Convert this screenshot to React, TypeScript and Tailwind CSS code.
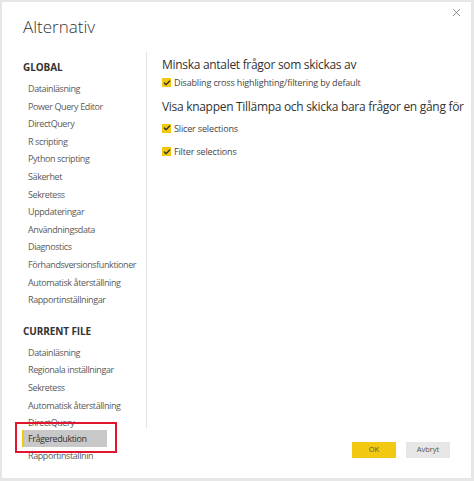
import { Check, X } from "lucide-react";

const GLOBAL_ITEMS = [
  "Datainläsning",
  "Power Query Editor",
  "DirectQuery",
  "R scripting",
  "Python scripting",
  "Säkerhet",
  "Sekretess",
  "Uppdateringar",
  "Användningsdata",
  "Diagnostics",
  "Förhandsversionsfunktioner",
  "Automatisk återställning",
  "Rapportinställningar",
];

const FILE_ITEMS = ["Datainläsning", "Regionala inställningar", "Sekretess", "Automatisk återställning", "DirectQuery"];

const FONT = { fontFamily: '"Open Sans", "Noto Sans", sans-serif' };

function CheckRow({ label }: { label: string }) {
  return (
    <div className="flex items-center gap-[3px]">
      <span className="flex h-[9px] w-[9px] items-center justify-center bg-[#f2c811]">
        <Check className="h-[8px] w-[8px] text-[#333]" strokeWidth={4} />
      </span>
      <span className="whitespace-nowrap text-[9px] tracking-[-0.15px] text-[#444]">{label}</span>
    </div>
  );
}

function NavItem({ label }: { label: string }) {
  return (
    <div className="h-[17.6px] whitespace-nowrap pl-[5px] text-[9px] leading-[17.6px] tracking-[-0.4px] text-[#5a5a5a]">
      {label}
    </div>
  );
}

export default function App() {
  return (
    <div className="h-[481px] w-[474px] bg-[#e6e6e6] pt-[2px] pr-[3px] pb-[3px] pl-[2px]" style={FONT}>
      <div className="relative flex h-full flex-col overflow-hidden bg-white">
        <button type="button" className="absolute right-[8px] top-[4px] text-[#777]">
          <X className="h-[13px] w-[13px]" strokeWidth={1.5} />
        </button>

        <h1 className="pl-[21px] pt-[13px] text-[17px] font-light leading-[24px] text-[#333]">Alternativ</h1>

        <div className="mt-[13px] flex flex-1">
          <div className="w-[144px] shrink-0 pl-[21px]">
            <div className="pt-[2px] text-[10px] font-bold leading-[26px] tracking-[-0.1px] text-[#333]">GLOBAL</div>
            {GLOBAL_ITEMS.map((item) => (
              <NavItem key={item} label={item} />
            ))}
            <div className="mt-[9px] text-[10px] font-bold leading-[26px] tracking-[-0.1px] text-[#333]">CURRENT FILE</div>
            {FILE_ITEMS.map((item) => (
              <NavItem key={item} label={item} />
            ))}
            <div className="relative h-[17.6px]">
              <div className="-ml-[1px] -mt-[2px] w-[85px] border-l-[2px] border-[#f2c811] bg-[#c8c8c8] pl-[4px] text-[9px] leading-[17px] tracking-[-0.4px] text-[#333]">
                Frågereduktion
              </div>
              <div className="absolute -left-[8px] -top-[8px] h-[31px] w-[102px] border-[2px] border-[#e0152f]" />
            </div>
            <NavItem label="Rapportinställnin" />
          </div>

          <div className="flex min-w-0 flex-1">
            <div className="h-[376px] w-px shrink-0 bg-[#e3e3e3]" />
            <div className="flex-1 pl-[15px] pt-[3px]">
              <div className="whitespace-nowrap text-[12px] leading-[20px] tracking-[-0.3px] text-[#333]">
                Minska antalet frågor som skickas av
              </div>
              <div className="mt-[1px]">
                <CheckRow label="Disabling cross highlighting/filtering by default" />
              </div>
              <div className="mt-[7px] whitespace-nowrap text-[12px] leading-[20px] tracking-[-0.3px] text-[#333]">
                Visa knappen Tillämpa och skicka bara frågor en gång för
              </div>
              <div className="mt-[5px] flex flex-col gap-[10px]">
                <CheckRow label="Slicer selections" />
                <CheckRow label="Filter selections" />
              </div>
            </div>
          </div>
        </div>

        <div className="absolute bottom-[20px] right-[21px] flex gap-[10px]">
          <button type="button" className="h-[16px] w-[44px] bg-[#f2c811] text-[7.5px] text-[#555]">
            OK
          </button>
          <button type="button" className="h-[16px] w-[44px] bg-[#e6e6e6] text-[7.5px] text-[#555]">
            Avbryt
          </button>
        </div>
      </div>
    </div>
  );
}
